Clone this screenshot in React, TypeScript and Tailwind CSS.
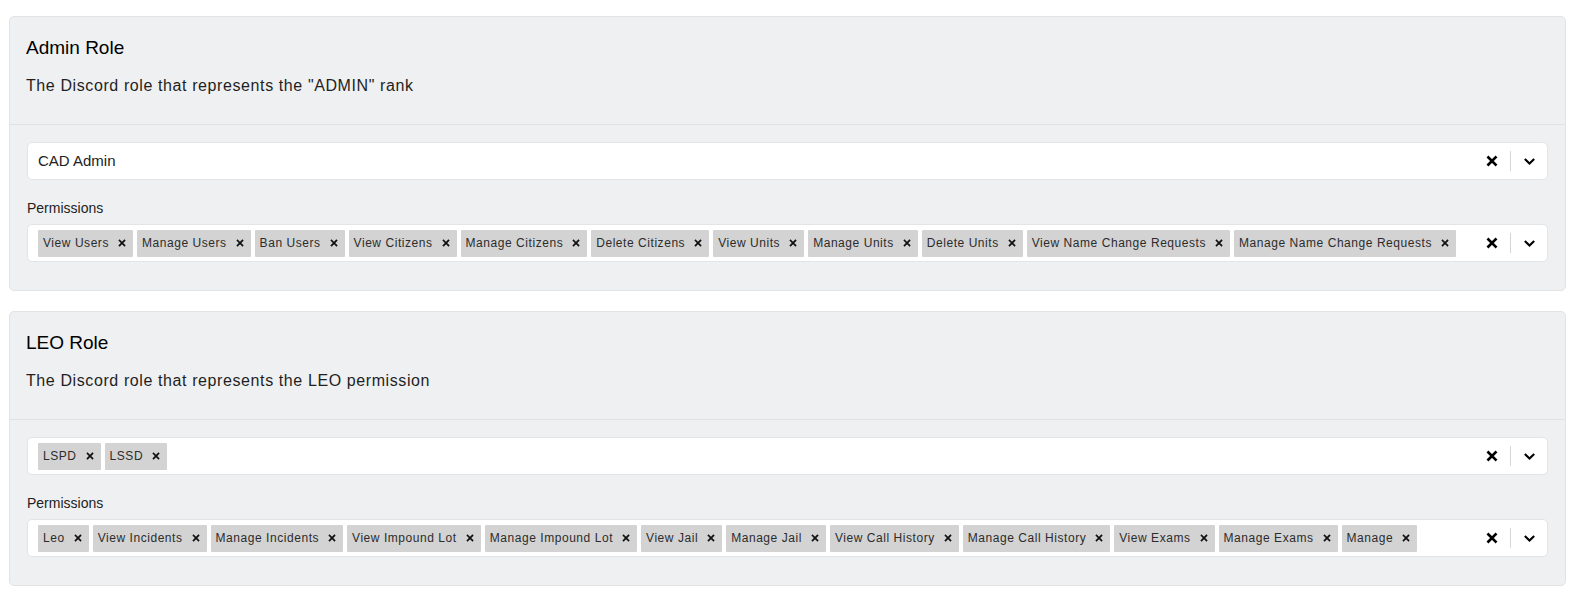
const font = { fontFamily: '"Liberation Sans", Arial, sans-serif' };

function SmallX({ className = '' }: { className?: string }) {
  return (
    <svg viewBox="0 0 10 10" className={className} aria-hidden="true">
      <path d="M2 2 L8 8 M8 2 L2 8" stroke="currentColor" strokeWidth="2.2" strokeLinecap="square" fill="none" />
    </svg>
  );
}

function Chevron() {
  return (
    <svg viewBox="0 0 14 10" className="w-[13px] h-[9px]" aria-hidden="true">
      <path d="M1.8 2.2 L7 7.2 L12.2 2.2" stroke="currentColor" strokeWidth="2.4" fill="none" />
    </svg>
  );
}

function Indicators() {
  return (
    <div className="flex items-center shrink-0 pr-[11px] text-black">
      <SmallX className="w-[12px] h-[12px]" />
      <div className="w-px h-[20px] bg-[#d6d6d6] mx-[12px]" />
      <Chevron />
    </div>
  );
}

function Tag({ label }: { label: string }) {
  return (
    <div className="flex items-center h-[27px] bg-[#d3d3d3] pl-[5px] pr-[7px] shrink-0 rounded-[1px]">
      <span className="text-[12px] tracking-[0.55px] text-[#2c2c2c] leading-none">{label}</span>
      <SmallX className="w-[8px] h-[8px] ml-[9px] text-[#111]" />
    </div>
  );
}

function MultiSelect({ values }: { values: string[] }) {
  return (
    <div className="flex items-center h-[38px] bg-white border border-[#e3e4e6] rounded-[5px]">
      <div className="flex-1 flex items-center gap-[4px] pl-[10px] overflow-hidden min-w-0">
        {values.map((v) => (
          <Tag key={v} label={v} />
        ))}
      </div>
      <Indicators />
    </div>
  );
}

function SingleSelect({ value }: { value: string }) {
  return (
    <div className="flex items-center h-[38px] bg-white border border-[#e3e4e6] rounded-[5px]">
      <div className="flex-1 pl-[10px] text-[15px] text-[#222]">{value}</div>
      <Indicators />
    </div>
  );
}

interface RoleCardProps {
  title: string;
  description: string;
  roles: string[] | string;
  permissions: string[];
}

function RoleCard({ title, description, roles, permissions }: RoleCardProps) {
  return (
    <div className="bg-[#eff0f2] border border-[#e2e3e5] rounded-[5px]">
      <div className="px-4 pt-[17px] pb-[26px] border-b border-[#e1e2e4]">
        <h2 className="text-[19px] leading-[28px] text-black">{title}</h2>
        <p className="text-[16px] leading-[24px] tracking-[0.6px] text-[#1f1f1f] mt-[12px]">{description}</p>
      </div>
      <div className="px-[17px] pt-[17px] pb-[28px]">
        {Array.isArray(roles) ? <MultiSelect values={roles} /> : <SingleSelect value={roles} />}
        <div className="text-[14px] leading-5 text-[#222] mt-[18px] mb-[6px]">Permissions</div>
        <MultiSelect values={permissions} />
      </div>
    </div>
  );
}

export default function App() {
  return (
    <div className="w-[1577px] h-[598px] bg-white pt-[16px] pl-[9px] pr-[11px]" style={font}>
      <div className="flex flex-col gap-[20px]">
        <RoleCard
          title="Admin Role"
          description={'The Discord role that represents the "ADMIN" rank'}
          roles="CAD Admin"
          permissions={[
            'View Users',
            'Manage Users',
            'Ban Users',
            'View Citizens',
            'Manage Citizens',
            'Delete Citizens',
            'View Units',
            'Manage Units',
            'Delete Units',
            'View Name Change Requests',
            'Manage Name Change Requests',
          ]}
        />
        <RoleCard
          title="LEO Role"
          description="The Discord role that represents the LEO permission"
          roles={['LSPD', 'LSSD']}
          permissions={[
            'Leo',
            'View Incidents',
            'Manage Incidents',
            'View Impound Lot',
            'Manage Impound Lot',
            'View Jail',
            'Manage Jail',
            'View Call History',
            'Manage Call History',
            'View Exams',
            'Manage Exams',
            'Manage',
          ]}
        />
      </div>
    </div>
  );
}
